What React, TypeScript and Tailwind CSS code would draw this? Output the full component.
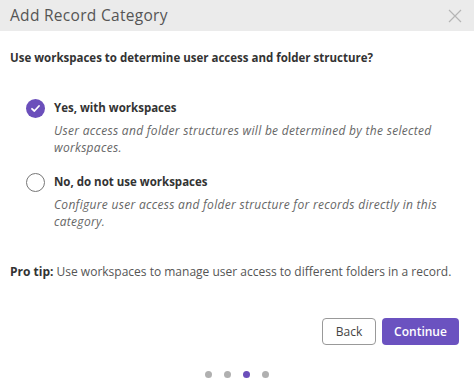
import React from "react";

export default function App() {
  const font = { fontFamily: '"Open Sans", "Liberation Sans", sans-serif' };
  return (
    <div className="w-[474px] h-[386px] bg-white relative overflow-hidden" style={font}>
      <div className="h-[31px] bg-[#ebebeb] flex items-center justify-between pl-[10px] pr-[10px]">
        <div className="text-[15.5px] text-[#555] tracking-[0.3px]">Add Record Category</div>
        <svg width="14" height="14" viewBox="0 0 14 14" className="mr-[2px]">
          <path d="M1 1L13 13M13 1L1 13" stroke="#b5b5b5" strokeWidth="1.2" />
        </svg>
      </div>
      <div className="px-[10px] pt-[18px]">
        <div className="text-[11.5px] font-bold text-[#333]">Use workspaces to determine user access and folder structure?</div>
        <div className="mt-[33px] pl-[16px] flex flex-col gap-[17px]">
          <div className="flex">
            <div className="w-[19px] h-[19px] rounded-full bg-[#6b4fbb] flex items-center justify-center shrink-0">
              <svg width="11" height="11" viewBox="0 0 11 11">
                <path d="M2 5.8L4.4 8L9 3" stroke="white" strokeWidth="1.8" fill="none" strokeLinecap="round" strokeLinejoin="round" />
              </svg>
            </div>
            <div className="ml-[9px]">
              <div className="text-[11.5px] font-bold text-[#333] leading-[18px]">Yes, with workspaces</div>
              <div className="mt-[6px] text-[12px] italic text-[#666] leading-[16.5px] tracking-[0.3px] w-[395px]">User access and folder structures will be determined by the selected workspaces.</div>
            </div>
          </div>
          <div className="flex">
            <div className="w-[19px] h-[19px] rounded-full border border-[#777] shrink-0" />
            <div className="ml-[9px]">
              <div className="text-[11.5px] font-bold text-[#333] leading-[18px]">No, do not use workspaces</div>
              <div className="mt-[6px] text-[12px] italic text-[#666] leading-[16.5px] tracking-[0.3px] w-[395px]">Configure user access and folder structure for records directly in this category.</div>
            </div>
          </div>
        </div>
        <div className="mt-[33px] text-[12px] text-[#555]"><span className="font-bold text-[#333]">Pro tip:</span> Use workspaces to manage user access to different folders in a record.</div>
        <div className="mt-[37px] flex justify-end gap-[6px] pr-[5px]">
          <button className="w-[54px] h-[27px] rounded-[4px] border border-[#999] bg-white text-[12px] text-[#444]">Back</button>
          <button className="w-[77px] h-[27px] rounded-[4px] bg-[#6b52c0] text-[12px] font-semibold text-white">Continue</button>
        </div>
        <div className="mt-[26px] flex justify-center gap-[12px]">
          <div className="w-[7px] h-[7px] rounded-full bg-[#b0b0b0]" />
          <div className="w-[7px] h-[7px] rounded-full bg-[#b0b0b0]" />
          <div className="w-[7px] h-[7px] rounded-full bg-[#6b4fbb]" />
          <div className="w-[7px] h-[7px] rounded-full bg-[#b0b0b0]" />
        </div>
      </div>
    </div>
  );
}
